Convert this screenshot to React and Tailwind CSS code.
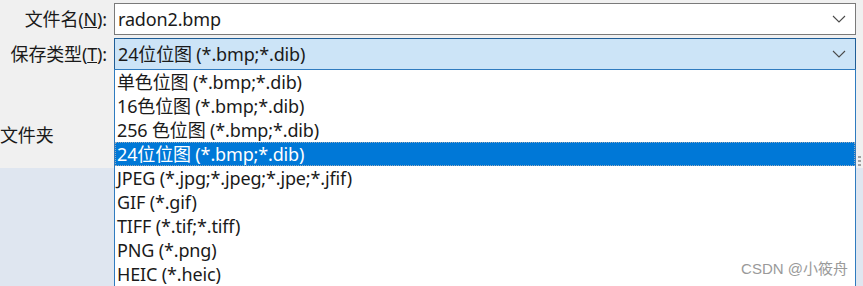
const Chevron = () => (
  <svg width="14" height="8" viewBox="0 0 14 8" fill="none">
    <path d="M1 1 L7 7 L13 1" stroke="#4a4a4a" strokeWidth="1.1" />
  </svg>
);

const types = [
  "单色位图 (*.bmp;*.dib)",
  "16色位图 (*.bmp;*.dib)",
  "256 色位图 (*.bmp;*.dib)",
  "24位位图 (*.bmp;*.dib)",
  "JPEG (*.jpg;*.jpeg;*.jpe;*.jfif)",
  "GIF (*.gif)",
  "TIFF (*.tif;*.tiff)",
  "PNG (*.png)",
  "HEIC (*.heic)",
];

const App = () => {
  const font = { fontFamily: '"Noto Sans", "Noto Sans CJK SC", sans-serif' };

  return (
    <div
      className="relative w-[863px] h-[286px] overflow-hidden bg-[#f0f0f0] text-[18px] tracking-[-0.15px] text-[#1a1a1a] flex flex-col"
      style={font}
    >
      {/* file name row */}
      <div className="flex items-center pt-[3px] h-[35px]">
        <div className="w-[114px] pr-[7px] text-right leading-none whitespace-nowrap">
          文件名(<span className="underline">N</span>):
        </div>
        <div className="flex items-center justify-between w-[742px] h-[32px] bg-white border border-[#7a7a7a] pl-[3px] pr-[9px]">
          <span className="leading-none">radon2.bmp</span>
          <Chevron />
        </div>
      </div>

      {/* type row */}
      <div className="flex items-center pt-[3px] h-[35px]">
        <div className="w-[114px] pr-[7px] text-right leading-none whitespace-nowrap">
          保存类型(<span className="underline">T</span>):
        </div>
        <div className="flex items-center justify-between w-[742px] h-[32px] bg-[#cce4f7] border border-[#1f5d96] pl-[3px] pr-[9px]">
          <span className="leading-none">24位位图 (*.bmp;*.dib)</span>
          <Chevron />
        </div>
      </div>

      {/* folder area */}
      <div className="flex items-start h-[98px] pt-[56px]">
        <span className="leading-none whitespace-nowrap">文件夹</span>
      </div>

      {/* lower panel */}
      <div className="flex-1 bg-[#dfe6f0]" />

      {/* splitter grip */}
      <div className="absolute right-[2px] top-[156px] flex flex-col gap-[2px]">
        <span className="w-[3px] h-[2px] bg-[#a0a0a0]" />
        <span className="w-[3px] h-[2px] bg-[#a0a0a0]" />
        <span className="w-[3px] h-[2px] bg-[#a0a0a0]" />
      </div>

      {/* open dropdown list */}
      <div className="absolute left-[114px] top-[69px] w-[742px] h-[230px] bg-white border border-[#2f7bbf] flex flex-col">
        {types.map((t, i) => (
          <div
            key={t}
            className={
              i === 3
                ? "h-[24px] flex items-center pl-[2px] bg-[#0078d7] text-white outline-1 outline-dotted outline-[#9ab] -outline-offset-1 leading-none whitespace-nowrap"
                : "h-[24px] flex items-center pl-[2px] leading-none whitespace-nowrap"
            }
          >
            {t}
          </div>
        ))}
        <div
          className="absolute right-[7px] bottom-[22px] text-[15px] tracking-normal text-[#9a9a9a] leading-none"
          style={{ fontFamily: '"Liberation Sans", "Noto Sans CJK SC", sans-serif' }}
        >
          CSDN @小筱舟
        </div>
      </div>
    </div>
  );
};

export default App;
